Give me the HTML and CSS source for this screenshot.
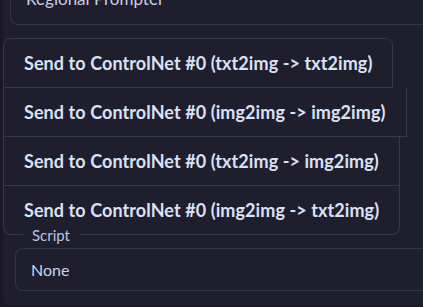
FILE: index.html
```html
<!DOCTYPE html>
<html>
<head>
<meta charset="utf-8">
<link rel="stylesheet" href="styles.css">
</head>
<body>
<div class="panel">
  <div class="rp-box"><span class="rp-title">Regional Prompter</span></div>
  <div class="script-block">
    <span class="block-label">Script</span>
    <div class="select">None</div>
  </div>
  <ul class="menu">
    <li class="menu-item">Send to ControlNet #0 (txt2img -&gt; txt2img)</li>
    <li class="menu-item">Send to ControlNet #0 (img2img -&gt; img2img)</li>
    <li class="menu-item">Send to ControlNet #0 (txt2img -&gt; img2img)</li>
    <li class="menu-item">Send to ControlNet #0 (img2img -&gt; txt2img)</li>
  </ul>
</div>
</body>
</html>
```
FILE: styles.css
```css
html, body {
  margin: 0;
  padding: 0;
  background: #191824;
  width: 423px;
  height: 307px;
  overflow: hidden;
  font-family: "Lato", "Liberation Sans", sans-serif;
}
.panel {
  position: relative;
  margin-left: 3px;
  height: 306px;
  background: #1f1e2d;
  border-bottom-left-radius: 8px;
  display: flex;
  flex-direction: column;
  overflow: hidden;
}
.rp-box {
  margin-left: 7px;
  margin-top: -30px;
  height: 53px;
  border: 1px solid #33334a;
  border-radius: 8px;
  border-right: none;
  border-top-right-radius: 0;
  border-bottom-right-radius: 0;
  position: relative;
}
.rp-title {
  position: absolute;
  left: 15px;
  top: 17px;
  font-size: 17px;
  color: #c9cee2;
}
.script-block {
  margin-top: 201px;
  display: flex;
  flex-direction: column;
  align-items: flex-start;
}
.block-label {
  position: relative;
  z-index: 2;
  margin-left: 20px;
  padding: 0 9px;
  background: #1f1e2d;
  font-size: 15px;
  line-height: 18px;
  color: #b9c3e6;
}
.select {
  margin-left: 12px;
  margin-top: 4px;
  width: 400px;
  height: 41px;
  border: 1px solid #33334a;
  border-right: none;
  border-radius: 8px 0 0 8px;
  padding-left: 15px;
  line-height: 41px;
  font-size: 16px;
  color: #c9d0ec;
}
.menu {
  position: absolute;
  left: 0;
  top: 38px;
  margin: 0;
  padding: 0;
  list-style: none;
  z-index: 1;
  display: flex;
  flex-direction: column;
  align-items: flex-start;
}
.menu-item {
  background: #1f1e2d;
  height: 48px;
  line-height: 48px;
  padding: 0 20px;
  border: 1px solid #38374b;
  border-top: none;
  font-size: 18px;
  font-weight: 700;
  letter-spacing: 0.08px;
  color: #dbe1f4;
  white-space: nowrap;
}
.menu-item:first-child {
  border-top: 1px solid #38374b;
  border-radius: 8px 8px 0 0;
}
.menu-item:last-child {
  border-radius: 0 0 8px 8px;
}
```
